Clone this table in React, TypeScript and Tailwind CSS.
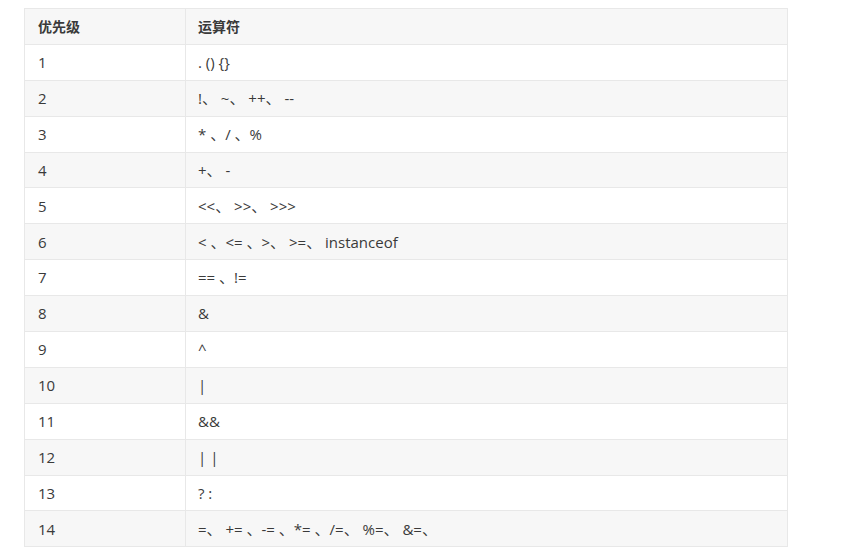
const rows: [string, string][] = [
  ["1", ". () {}"],
  ["2", "!、 ~、 ++、 --"],
  ["3", "* 、/ 、%"],
  ["4", "+、 -"],
  ["5", "<<、 >>、 >>>"],
  ["6", "< 、<= 、>、 >=、 instanceof"],
  ["7", "== 、!="],
  ["8", "&"],
  ["9", "^"],
  ["10", "|"],
  ["11", "&&"],
  ["12", "| |"],
  ["13", "? :"],
  ["14", "=、 += 、-= 、*= 、/=、 %=、 &=、"],
];

export default function App() {
  return (
    <div className="min-h-[552px] w-[863px] bg-white pl-[24px] pt-[8px] font-['Open_Sans','Noto_Sans_CJK_SC',sans-serif] text-[15px] text-[#3a3a3a]">
      <table className="w-[764px] border-collapse border border-[#e8e8e8]">
        <thead>
          <tr className="h-[35.9px] bg-[#f7f7f7]">
            <th className="w-[161px] border border-[#e8e8e8] px-[13px] text-left text-[14px] font-bold">优先级</th>
            <th className="border border-[#e8e8e8] px-[12px] text-left text-[14px] font-bold">运算符</th>
          </tr>
        </thead>
        <tbody>
          {rows.map(([level, ops], i) => (
            <tr key={level} className={i % 2 === 1 ? "h-[35.9px] bg-[#f7f7f7]" : "h-[35.9px] bg-white"}>
              <td className="border border-[#e8e8e8] px-[13px]">{level}</td>
              <td className="whitespace-pre border border-[#e8e8e8] px-[12px]">{ops}</td>
            </tr>
          ))}
        </tbody>
      </table>
    </div>
  );
}
